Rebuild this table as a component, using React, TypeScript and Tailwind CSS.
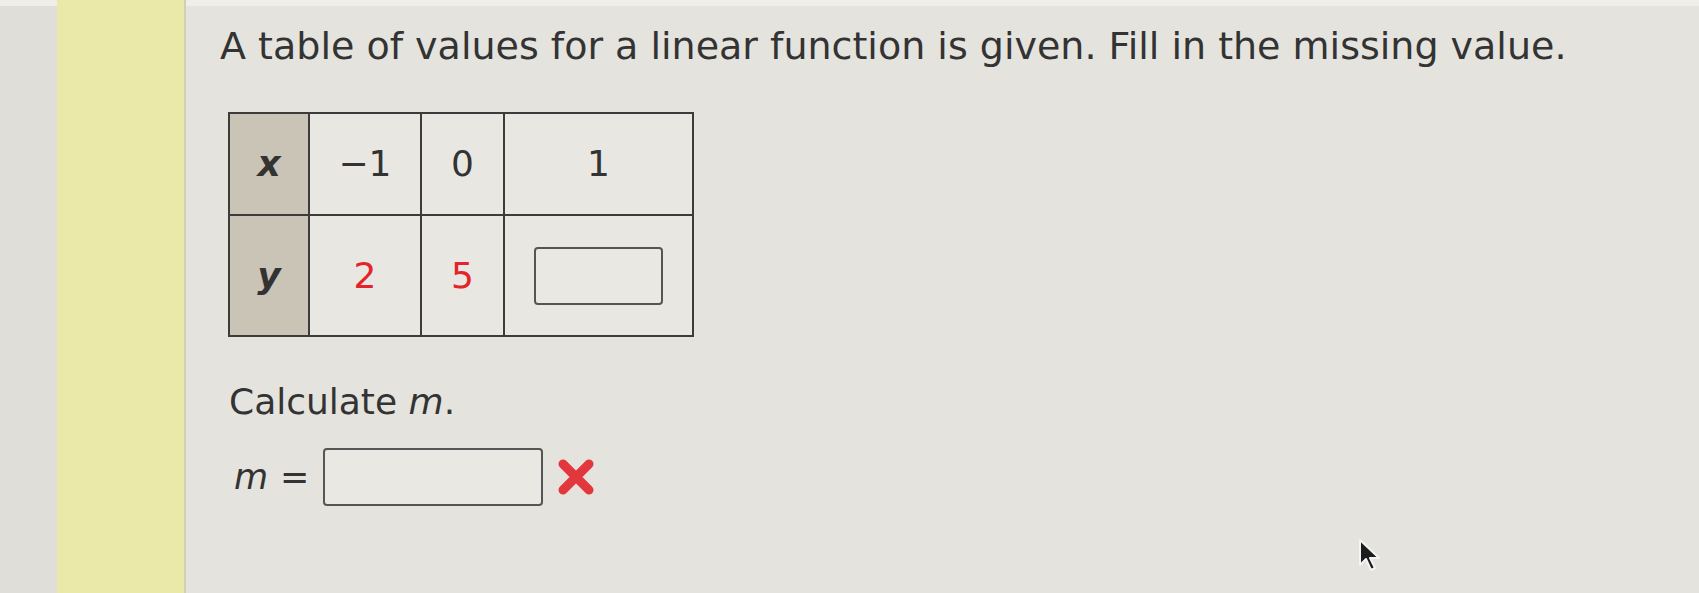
const FONT = "font-['DejaVu_Sans','Verdana',sans-serif]";

function Cursor() {
  return (
    <svg
      className="absolute left-[1357px] top-[538px]"
      width="26"
      height="36"
      viewBox="0 0 26 36"
    >
      <path
        d="M3 2 L3 27 L9 21 L14 32 L18 30 L13 20 L22 20 Z"
        fill="#1c1c1c"
        stroke="#f4f4f4"
        strokeWidth="2"
        strokeLinejoin="round"
      />
    </svg>
  );
}

function RedX() {
  return (
    <svg width="42" height="40" viewBox="0 0 42 40" className="ml-[12px]">
      <path
        d="M8 7 L34 33 M34 7 L8 33"
        stroke="#e2373d"
        strokeWidth="9"
        strokeLinecap="round"
      />
    </svg>
  );
}

export default function App() {
  return (
    <div
      className={`${FONT} relative flex h-[593px] w-[1699px] overflow-hidden bg-[#e5e3de] text-[#333]`}
    >
      {/* left margin + yellow stripe */}
      <div className="w-[57px] shrink-0 border-t-[6px] border-[#efeeea] bg-[#e0ded8]" />
      <div className="w-[129px] shrink-0 border-r-2 border-[#d2d0b4] bg-[#eae9a9]" />

      <div className="flex-1 border-t-[6px] border-[#efeeea] pl-[34px] pt-[18px]">
        <h1 className="text-[38px] font-normal leading-[44px]">
          A table of values for a linear function is given. Fill in the missing value.
        </h1>

        <table className="ml-[8px] mt-[44px] border-collapse border-2 border-[#3c3c3c] text-[36px]">
          <tbody>
            <tr className="h-[102px]">
              <td className="w-[80px] border-2 border-[#3c3c3c] bg-[#c9c4b5] text-center font-bold italic">
                x
              </td>
              <td className="w-[112px] border-2 border-[#3c3c3c] bg-[#e9e7e2] text-center">
                −1
              </td>
              <td className="w-[83px] border-2 border-[#3c3c3c] bg-[#e9e7e2] text-center">
                0
              </td>
              <td className="w-[189px] border-2 border-[#3c3c3c] bg-[#e9e7e2] text-center">
                1
              </td>
            </tr>
            <tr className="h-[121px]">
              <td className="border-2 border-[#3c3c3c] bg-[#c9c4b5] text-center font-bold italic">
                y
              </td>
              <td className="border-2 border-[#3c3c3c] bg-[#e9e7e2] text-center text-[#e3242b]">
                2
              </td>
              <td className="border-2 border-[#3c3c3c] bg-[#e9e7e2] text-center text-[#e3242b]">
                5
              </td>
              <td className="border-2 border-[#3c3c3c] bg-[#e9e7e2]">
                <div className="mx-auto h-[58px] w-[129px] rounded-[4px] border-2 border-[#555] bg-[#eae8e3]" />
              </td>
            </tr>
          </tbody>
        </table>

        <div className="ml-[9px] mt-[44px] text-[36px] leading-[42px]">
          Calculate <i>m</i>.
        </div>

        <div className="ml-[14px] mt-[25px] flex items-center">
          <span className="text-[35px] italic">m</span>
          <span className="ml-[12px] text-[35px]">=</span>
          <div className="ml-[14px] h-[58px] w-[220px] rounded-[4px] border-2 border-[#555] bg-[#eae8e3]" />
          <RedX />
        </div>
      </div>

      <Cursor />
    </div>
  );
}
